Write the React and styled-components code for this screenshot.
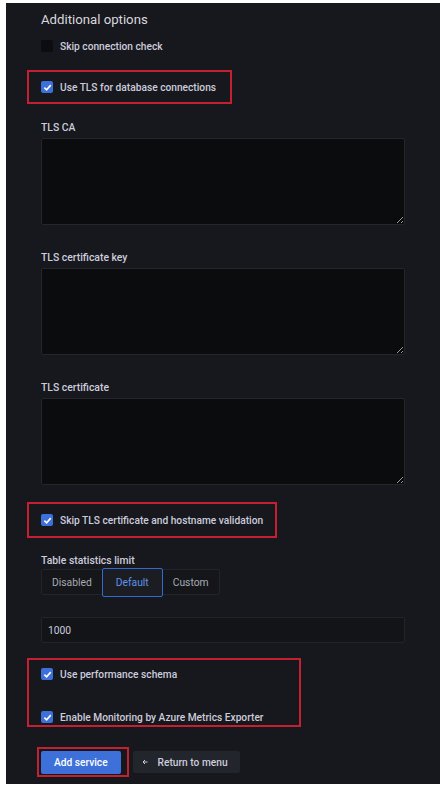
import styled, { createGlobalStyle } from "styled-components";

const GlobalStyle = createGlobalStyle`
  body {
    margin: 0;
    background: #ffffff;
    font-family: Roboto, "Liberation Sans", Arial, sans-serif;
  }
`;

const Page = styled.div`
  padding: 3px 0 5px 6px;
`;

const Panel = styled.div`
  background: #17181d;
  padding: 7px 35px 7px 35px;
  display: flex;
  flex-direction: column;
  align-items: stretch;
`;

const Title = styled.h3`
  margin: 0;
  font-size: 13.2px;
  font-weight: 400;
  line-height: 20px;
  color: #d8d9de;
`;

const Highlight = styled.div`
  align-self: flex-start;
  box-sizing: border-box;
  width: ${(p) => p.$width}px;
  margin-top: ${(p) => p.$top}px;
  margin-left: -14px;
  padding: ${(p) => p.$pad || "0 12px"};
  border: 2px solid #c42130;
  display: flex;
  flex-direction: column;
  justify-content: center;
  gap: ${(p) => p.$gap || 0}px;
  min-height: ${(p) => p.$height}px;
`;

const CheckRow = styled.label`
  display: flex;
  align-items: center;
  gap: 7px;
  height: 16px;
  margin-top: ${(p) => p.$top || 0}px;
  font-size: 10.2px;
  font-weight: 500;
  white-space: nowrap;
  color: #ccccdc;
`;

const Box = styled.span`
  width: 12px;
  height: 12px;
  border-radius: 2px;
  flex-shrink: 0;
  display: flex;
  align-items: center;
  justify-content: center;
  background: ${(p) => (p.$checked ? "#3d71d9" : "#0c0d10")};
`;

const Label = styled.div`
  margin-top: ${(p) => p.$top}px;
  font-size: 10.4px;
  font-weight: 500;
  line-height: 16px;
  color: #ccccdc;
`;

const Area = styled.textarea`
  display: block;
  box-sizing: border-box;
  margin-top: 2px;
  width: 100%;
  height: 87px;
  background: #0b0c0e;
  border: 1px solid #24262c;
  border-radius: 2px;
  resize: vertical;
  color: #ccccdc;
  outline: none;
`;

const Radios = styled.div`
  align-self: flex-start;
  display: flex;
  align-items: center;
  height: 26px;
  box-sizing: border-box;
  border: 1px solid #22242a;
  border-radius: 2px;
  background: #15161a;
`;

const RadioItem = styled.div`
  box-sizing: border-box;
  height: ${(p) => (p.$active ? 29 : 24)}px;
  display: flex;
  align-items: center;
  padding: 0 ${(p) => (p.$active ? 13 : 10)}px;
  font-size: 10.3px;
  color: ${(p) => (p.$active ? "#5d93e8" : "#a8aab2")};
  border: ${(p) => (p.$active ? "1px solid #2f6bd0" : "none")};
  background: ${(p) => (p.$active ? "#1b1d22" : "transparent")};
  border-radius: 2px;
`;

const Input = styled.div`
  margin-top: 22px;
  height: 26px;
  box-sizing: border-box;
  border: 1px solid #22242a;
  border-radius: 2px;
  background: #131418;
  display: flex;
  align-items: center;
  padding: 0 6px;
  font-size: 10.3px;
  color: #ccccdc;
`;

const Actions = styled.div`
  margin-top: 20px;
  display: flex;
  align-items: center;
  gap: 4px;
`;

const ButtonFrame = styled.div`
  margin-left: -4px;
  padding: 2px 6px 1px 2px;
  border: 2px solid #c42130;
`;

const Button = styled.button`
  height: ${(p) => (p.$primary ? 23 : 22)}px;
  padding: ${(p) => (p.$primary ? "0 13px" : "0 12px 0 9px")};
  border: none;
  border-radius: 2px;
  display: flex;
  align-items: center;
  gap: 10px;
  font-family: inherit;
  font-size: 10.2px;
  font-weight: 500;
  white-space: nowrap;
  color: ${(p) => (p.$primary ? "#ffffff" : "#ccccdc")};
  background: ${(p) => (p.$primary ? "#3d71d9" : "#22252b")};
`;

const Check = ({ checked }) => (
  <Box $checked={checked}>
    {checked && (
      <svg width="9" height="9" viewBox="0 0 10 10">
        <path d="M1.5 5.2 L4 7.6 L8.6 2.4" fill="none" stroke="#fff" strokeWidth="1.8" />
      </svg>
    )}
  </Box>
);

const ArrowLeft = () => (
  <svg width="6" height="6" viewBox="0 0 6 6">
    <path d="M5.5 3 H1 M3 1 L1 3 L3 5" fill="none" stroke="#ccccdc" strokeWidth="1" />
  </svg>
);

const App = () => (
  <>
    <GlobalStyle />
    <Page>
      <Panel>
        <Title>Additional options</Title>
        <CheckRow $top={8}>
          <Check />
          Skip connection check
        </CheckRow>

        <Highlight $width={205} $top={16} $height={34}>
          <CheckRow>
            <Check checked />
            Use TLS for database connections
          </CheckRow>
        </Highlight>

        <Label $top={16}>TLS CA</Label>
        <Area />
        <Label $top={25}>TLS certificate key</Label>
        <Area />
        <Label $top={25}>TLS certificate</Label>
        <Area />

        <Highlight $width={250} $top={17} $height={36}>
          <CheckRow>
            <Check checked />
            Skip TLS certificate and hostname validation
          </CheckRow>
        </Highlight>

        <Label $top={15}>Table statistics limit</Label>
        <Radios>
          <RadioItem>Disabled</RadioItem>
          <RadioItem $active>Default</RadioItem>
          <RadioItem>Custom</RadioItem>
        </Radios>

        <Input>1000</Input>

        <Highlight $width={274} $top={15} $height={69} $pad="6px 12px 0" $gap={27}>
          <CheckRow>
            <Check checked />
            Use performance schema
          </CheckRow>
          <CheckRow>
            <Check checked />
            Enable Monitoring by Azure Metrics Exporter
          </CheckRow>
        </Highlight>

        <Actions>
          <ButtonFrame>
            <Button $primary>Add service</Button>
          </ButtonFrame>
          <Button>
            <ArrowLeft />
            Return to menu
          </Button>
        </Actions>
      </Panel>
    </Page>
  </>
);

export default App;
